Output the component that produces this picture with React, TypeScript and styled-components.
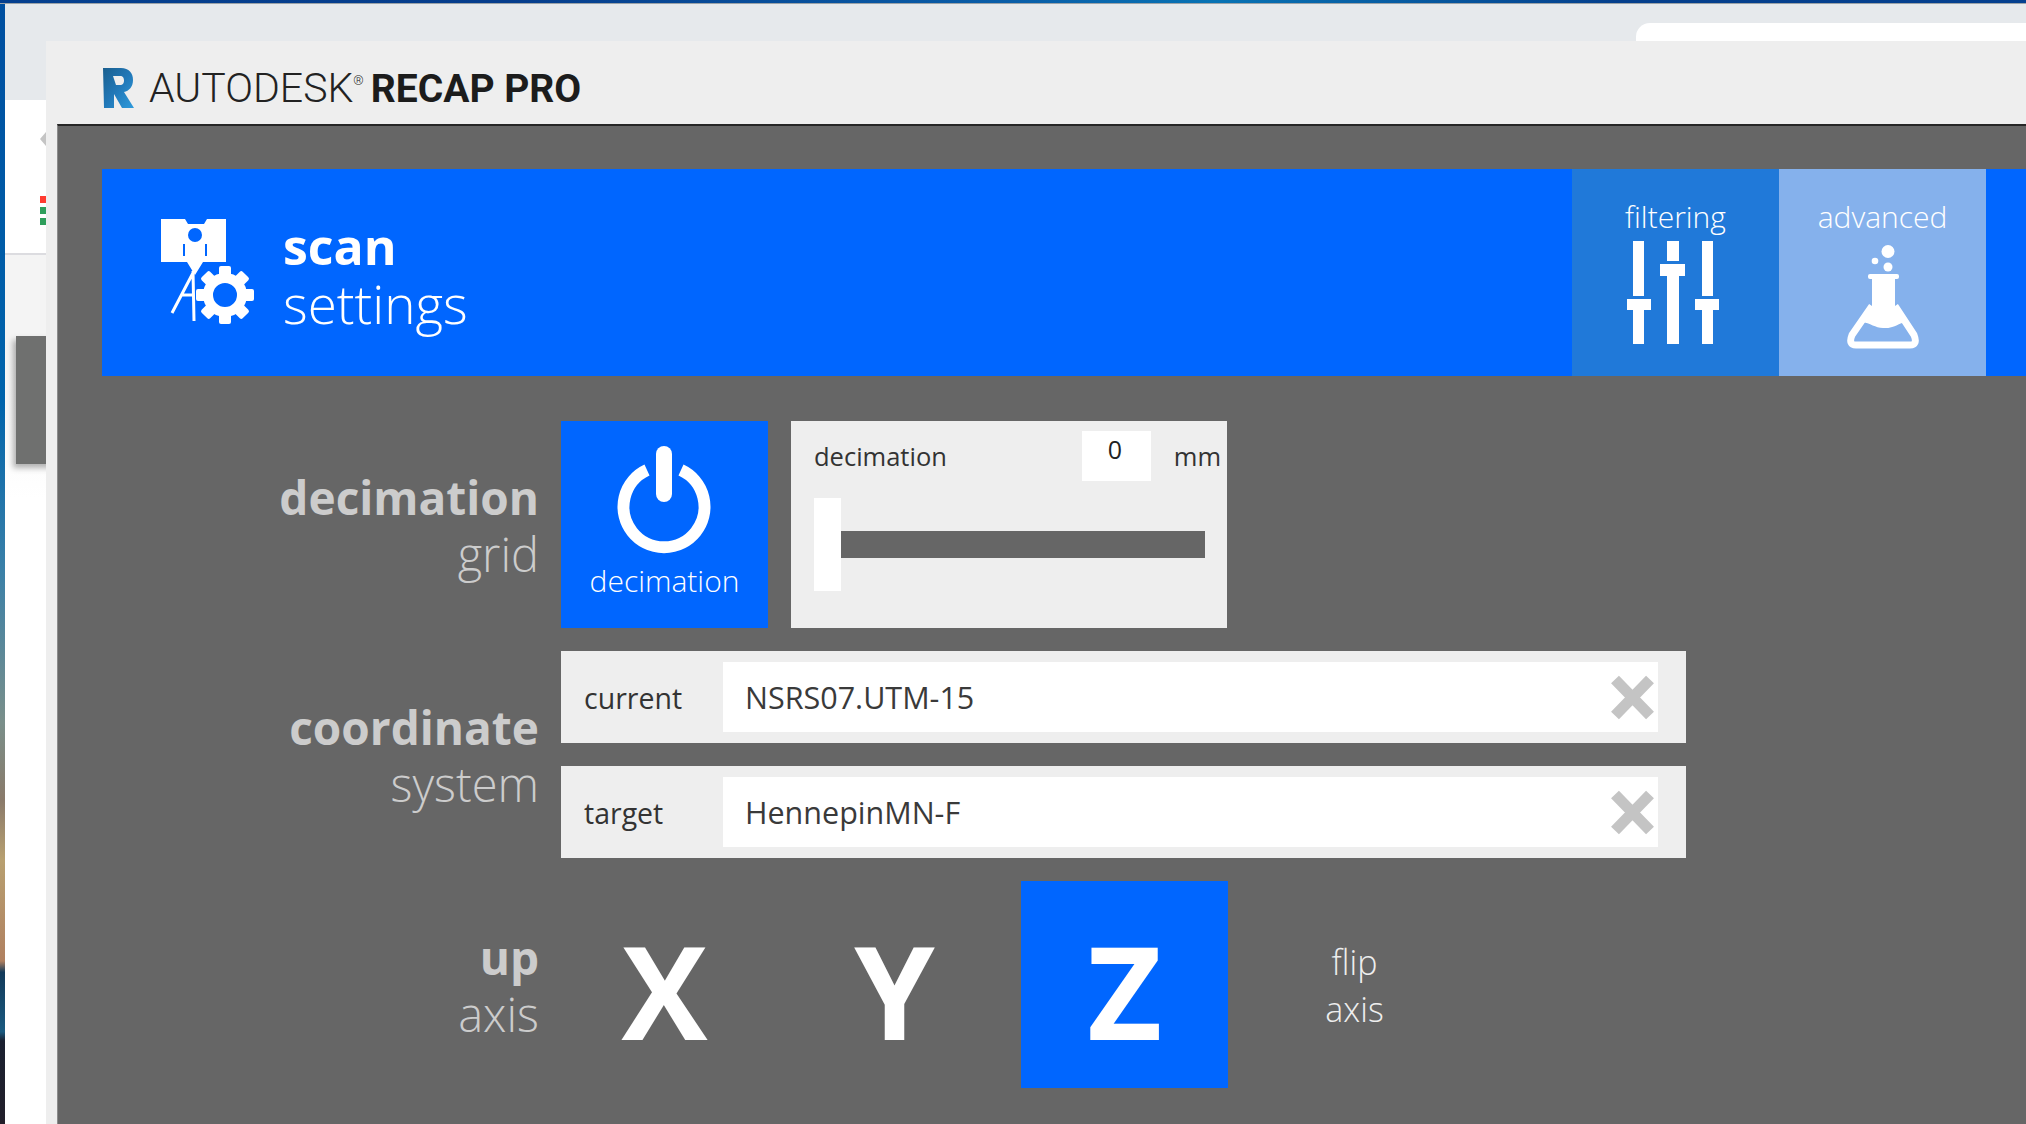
import React from "react";
import styled, { createGlobalStyle } from "styled-components";

const Global = createGlobalStyle`
  html, body { margin: 0; padding: 0; background: #fff; }
  #root { width: 2026px; height: 1124px; overflow: hidden; }
  * { box-sizing: border-box; }
`;

const FONT = `"Open Sans", "Noto Sans", sans-serif`;

const Desktop = styled.div`
  position: relative;
  width: 2026px;
  height: 1124px;
  overflow: hidden;
  display: flex;
  flex-direction: column;
  font-family: ${FONT};
  background: linear-gradient(
    180deg,
    #004fa0 0%,
    #0064ac 35.6%,
    #3a80a8 50.7%,
    #7a8f8a 64.3%,
    #8a7a6a 71.2%,
    #b8a070 76.5%,
    #b08060 85.5%,
    #123a5a 86.5%,
    #1a5a80 91.8%,
    #1a2030 92.6%,
    #221f2a 100%
  );
  padding-left: 5px;
`;

const TopEdge = styled.div`
  position: absolute;
  inset: 0 0 auto 0;
  height: 4px;
  background: linear-gradient(90deg, #05408f 0%, #063d8c 25%, #0a5ea8 50%, #0873b4 60%, #053f8c 80%, #05408f 100%);
  border-bottom: 1px solid #9ca3a8;
`;

const Browser = styled.div`
  flex: 1;
  display: flex;
  flex-direction: column;
  margin-top: 4px;
`;

const BrowserTabs = styled.div`
  height: 96px;
  background: #e6e9ec;
  padding: 19px 0 0 1631px;
`;

const ActiveTab = styled.div`
  height: 40px;
  background: #fff;
  border-radius: 14px 0 0 0;
`;

const BrowserToolbar = styled.div`
  height: 155px;
  background: #fff;
  border-bottom: 2px solid #dcdce0;
  padding: 32px 0 0 35px;
  display: flex;
  flex-direction: column;
`;

const Chevron = styled.div`
  width: 0;
  height: 0;
  border-top: 7px solid transparent;
  border-bottom: 7px solid transparent;
  border-right: 6px solid #c4c4c4;
  margin-bottom: 50px;
`;

const Marker = styled.div<{ $color: string }>`
  width: 6px;
  height: 7px;
  margin-bottom: 4px;
  background: ${(p) => p.$color};
`;

const BrowserBody = styled.div`
  flex: 1;
  background: linear-gradient(180deg, #f4f4f4 0%, #f4f4f4 10%, #fff 28%);
  padding: 81px 0 0 11px;
`;

const GrayCard = styled.div`
  width: 60px;
  height: 128px;
  background: #6f706f;
  box-shadow: -3px 4px 6px rgba(0, 0, 0, 0.3);
`;

const AppWindow = styled.div`
  position: absolute;
  left: 46px;
  top: 41px;
  right: 0;
  bottom: 0;
  background: #eeeeee;
  padding-left: 11px;
  display: flex;
  flex-direction: column;
`;

const TitleBar = styled.div`
  height: 83px;
  display: flex;
  align-items: center;
  padding: 11px 0 0 45px;
  gap: 15px;
`;

const Brand = styled.div`
  font-family: Roboto, sans-serif;
  font-size: 41px;
  font-weight: 300;
  color: #222;
  white-space: nowrap;
  sup { font-size: 13px; line-height: 0; vertical-align: 17px; margin-right: 7px; }
  b { font-size: 39px; font-weight: 700; color: #1c1c1c; }
`;

const Content = styled.div`
  flex: 1;
  background: #666666;
  border-top: 2px solid #262626;
  border-left: 1px solid #8c8c8c;
  padding: 43px 0 0 44px;
  display: flex;
  flex-direction: column;
`;

const Banner = styled.div`
  height: 207px;
  background: #0066ff;
  display: flex;
  align-items: center;
  padding: 0 40px 0 59px;
  color: #fff;
  > svg { margin-bottom: 2px; }
`;

const BannerTitle = styled.div`
  margin-left: 29px;
  display: flex;
  flex-direction: column;
  margin-top: 4px;
  font-size: 50px;
  line-height: 58px;
  strong { font-weight: 700; }
  span { font-size: 53px; font-weight: 300; }
`;

const BannerTabs = styled.div`
  margin-left: auto;
  display: flex;
  height: 100%;
`;

const BannerTab = styled.div<{ $bg: string }>`
  width: 207px;
  height: 100%;
  background: ${(p) => p.$bg};
  display: flex;
  flex-direction: column;
  align-items: center;
  font-size: 30px;
  font-weight: 300;
  line-height: 40px;
  padding-top: 28px;
`;

const Form = styled.div`
  margin-top: 45px;
  display: flex;
  flex-direction: column;
  gap: 23px;
`;

const Row = styled.div`
  display: flex;
  gap: 22px;
`;

const RowLabel = styled.div`
  width: 437px;
  display: flex;
  flex-direction: column;
  justify-content: center;
  align-items: flex-end;
  padding-top: 2px;
  color: #cccccc;
  font-size: 46px;
  line-height: 57px;
  strong { font-weight: 700; }
  span { font-size: 47px; font-weight: 300; }
`;

const Tile = styled.div<{ $on?: boolean }>`
  width: 207px;
  height: 207px;
  background: ${(p) => (p.$on ? "#0066ff" : "transparent")};
  color: #fff;
  display: flex;
  flex-direction: column;
  align-items: center;
  justify-content: center;
`;

const PowerTile = styled(Tile)`
  justify-content: flex-start;
  padding-top: 25px;
  font-size: 30px;
  font-weight: 300;
  line-height: 40px;
  svg { margin-bottom: 6px; margin-right: 2px; }
`;

const AxisLetter = styled(Tile)`
  font-size: 129px;
  font-weight: 700;
  line-height: 1;
  padding-top: 11px;
`;

const FlipLabel = styled(Tile)`
  font-size: 34px;
  font-weight: 300;
  line-height: 47px;
  padding-top: 3px;
  color: #eeeeee;
`;

const AxisTiles = styled.div`
  display: flex;
  gap: 23px;
`;

const DecimationPanel = styled.div`
  width: 436px;
  height: 207px;
  margin-left: 1px;
  background: #eeeeee;
  display: flex;
  flex-direction: column;
  padding: 10px 6px 0 23px;
  color: #333;
`;

const PanelHead = styled.div`
  display: flex;
  align-items: center;
  height: 50px;
  font-size: 25.5px;
  span:first-child { margin-right: auto; }
`;

const Numeric = styled.div`
  width: 69px;
  height: 50px;
  background: #fff;
  margin-right: 23px;
  padding-right: 3px;
  font-size: 25px;
  text-align: center;
  color: #222;
  line-height: 36px;
`;

const Slider = styled.div`
  margin-top: 17px;
  display: flex;
  align-items: center;
  height: 93px;
`;

const Thumb = styled.div`
  width: 27px;
  height: 93px;
  background: #fff;
`;

const Track = styled.div`
  width: 364px;
  height: 27px;
  background: #666666;
`;

const CoordList = styled.div`
  display: flex;
  flex-direction: column;
  gap: 23px;
`;

const CoordRow = styled.div`
  width: 1125px;
  height: 92px;
  background: #eeeeee;
  display: flex;
  align-items: center;
  padding: 0 28px 0 23px;
  font-size: 28.5px;
  color: #333;
`;

const CoordName = styled.div`
  width: 139px;
  padding-top: 2px;
`;

const CoordField = styled.div`
  flex: 1;
  height: 70px;
  background: #fff;
  display: flex;
  align-items: center;
  padding: 0 4px 0 22px;
  font-size: 30.5px;
  color: #3a3a3a;
  justify-content: space-between;
`;

const ScanIcon = () => (
  <svg width="93" height="106" viewBox="0 0 93 106" fill="none">
    <path d="M0 0H24L27 5H43L46 0H65V43H42L34 56L26 43H0Z" fill="#fff" />
    <circle cx="34" cy="16" r="7" fill="#0066ff" />
    <path d="M23 25V37M45 25V37" stroke="#0066ff" strokeWidth="2" />
    <path d="M33 52L11 94M32 52L33 102M20 76H32" stroke="#fff" strokeWidth="3" />
    <g transform="translate(64 76)">
      <g fill="#fff">
        {[0, 45, 90, 135, 180, 225, 270, 315].map((a) => (
          <rect key={a} x="-6" y="-29" width="12" height="14" rx="2" transform={`rotate(${a})`} />
        ))}
      </g>
      <circle r="17" stroke="#fff" strokeWidth="10" fill="none" />
    </g>
  </svg>
);

const SlidersIcon = () => (
  <svg width="92" height="103" viewBox="0 0 92 103" fill="#fff" style={{ marginTop: 4, marginRight: 5 }}>
    <rect x="6" y="0" width="11" height="55" />
    <rect x="6" y="69" width="11" height="34" />
    <rect x="0" y="58" width="24" height="11" />
    <rect x="40" y="0" width="12" height="20" />
    <rect x="40" y="35" width="12" height="68" />
    <rect x="33" y="23" width="25" height="12" />
    <rect x="75" y="0" width="11" height="55" />
    <rect x="75" y="69" width="11" height="34" />
    <rect x="68" y="58" width="24" height="11" />
  </svg>
);

const FlaskIcon = () => (
  <svg width="72" height="104" viewBox="0 0 72 104" fill="#fff" style={{ marginTop: 8 }}>
    <circle cx="41" cy="6.5" r="6.5" />
    <circle cx="28" cy="16" r="3.3" />
    <circle cx="41" cy="22" r="4.5" />
    <rect x="21" y="29" width="31" height="5" rx="2" />
    <path d="M25 33H48V61L59 77C52 78 46 84 36 83C28 83 24 78 14 77L25 61Z" />
    <path d="M25 61L5 90Q1 100 9 100H63Q71 100 67 90L48 61" fill="none" stroke="#fff" strokeWidth="7" />
  </svg>
);

const PowerIcon = () => (
  <svg width="94" height="109" viewBox="0 0 94 109" fill="none" stroke="#fff">
    <path d="M30 24A40.5 40.5 0 1 0 64 24" strokeWidth="12" strokeLinecap="butt" />
    <path d="M47 8V48" strokeWidth="16" strokeLinecap="round" />
  </svg>
);

const CloseIcon = () => (
  <svg width="43" height="45" viewBox="0 0 43 45" stroke="#c4c4c4" strokeWidth="11" strokeLinejoin="round">
    <path d="M4 4.5L39 40.5M39 4.5L4 40.5" />
  </svg>
);

const LogoR = () => (
  <svg width="32" height="40" viewBox="0 0 32 40">
    <defs>
      <linearGradient id="lg" x1="0" y1="0" x2="1" y2="1">
        <stop offset="0" stopColor="#1a5f8e" />
        <stop offset="0.5" stopColor="#2178b8" />
        <stop offset="1" stopColor="#2f9bdc" />
      </linearGradient>
    </defs>
    <path
      fillRule="evenodd"
      fill="url(#lg)"
      d="M1 0H19C27 0 31 5 31 12C31 19 27 23 22 24L32 40H20L12 26V40H2ZM11 8L14 17H18C21 17 22 15 22 12.5C22 10 21 8 18 8Z"
    />
  </svg>
);

export default function App() {
  return (
    <Desktop>
      <Global />
      <TopEdge />
      <Browser>
        <BrowserTabs>
          <ActiveTab />
        </BrowserTabs>
        <BrowserToolbar>
          <Chevron />
          <Marker $color="#ff3b30" />
          <Marker $color="#2e9e5b" />
          <Marker $color="#2e9e5b" />
        </BrowserToolbar>
        <BrowserBody>
          <GrayCard />
        </BrowserBody>
      </Browser>
      <AppWindow>
        <TitleBar>
          <LogoR />
          <Brand>
            AUTODESK<sup>®</sup>
            <b>RECAP PRO</b>
          </Brand>
        </TitleBar>
        <Content>
          <Banner>
            <ScanIcon />
            <BannerTitle>
              <strong>scan</strong>
              <span>settings</span>
            </BannerTitle>
            <BannerTabs>
              <BannerTab $bg="#2079d9">
                filtering
                <SlidersIcon />
              </BannerTab>
              <BannerTab $bg="#85b1ec">
                advanced
                <FlaskIcon />
              </BannerTab>
            </BannerTabs>
          </Banner>
          <Form>
            <Row>
              <RowLabel>
                <strong>decimation</strong>
                <span>grid</span>
              </RowLabel>
              <PowerTile $on>
                <PowerIcon />
                decimation
              </PowerTile>
              <DecimationPanel>
                <PanelHead>
                  <span>decimation</span>
                  <Numeric>0</Numeric>
                  <span>mm</span>
                </PanelHead>
                <Slider>
                  <Thumb />
                  <Track />
                </Slider>
              </DecimationPanel>
            </Row>
            <Row>
              <RowLabel>
                <strong>coordinate</strong>
                <span>system</span>
              </RowLabel>
              <CoordList>
                <CoordRow>
                  <CoordName>current</CoordName>
                  <CoordField>
                    NSRS07.UTM-15
                    <CloseIcon />
                  </CoordField>
                </CoordRow>
                <CoordRow>
                  <CoordName>target</CoordName>
                  <CoordField>
                    HennepinMN-F
                    <CloseIcon />
                  </CoordField>
                </CoordRow>
              </CoordList>
            </Row>
            <Row>
              <RowLabel>
                <strong>up</strong>
                <span>axis</span>
              </RowLabel>
              <AxisTiles>
                <AxisLetter>X</AxisLetter>
                <AxisLetter>Y</AxisLetter>
                <AxisLetter $on>Z</AxisLetter>
                <FlipLabel>
                  <span>flip</span>
                  <span>axis</span>
                </FlipLabel>
              </AxisTiles>
            </Row>
          </Form>
        </Content>
      </AppWindow>
    </Desktop>
  );
}
